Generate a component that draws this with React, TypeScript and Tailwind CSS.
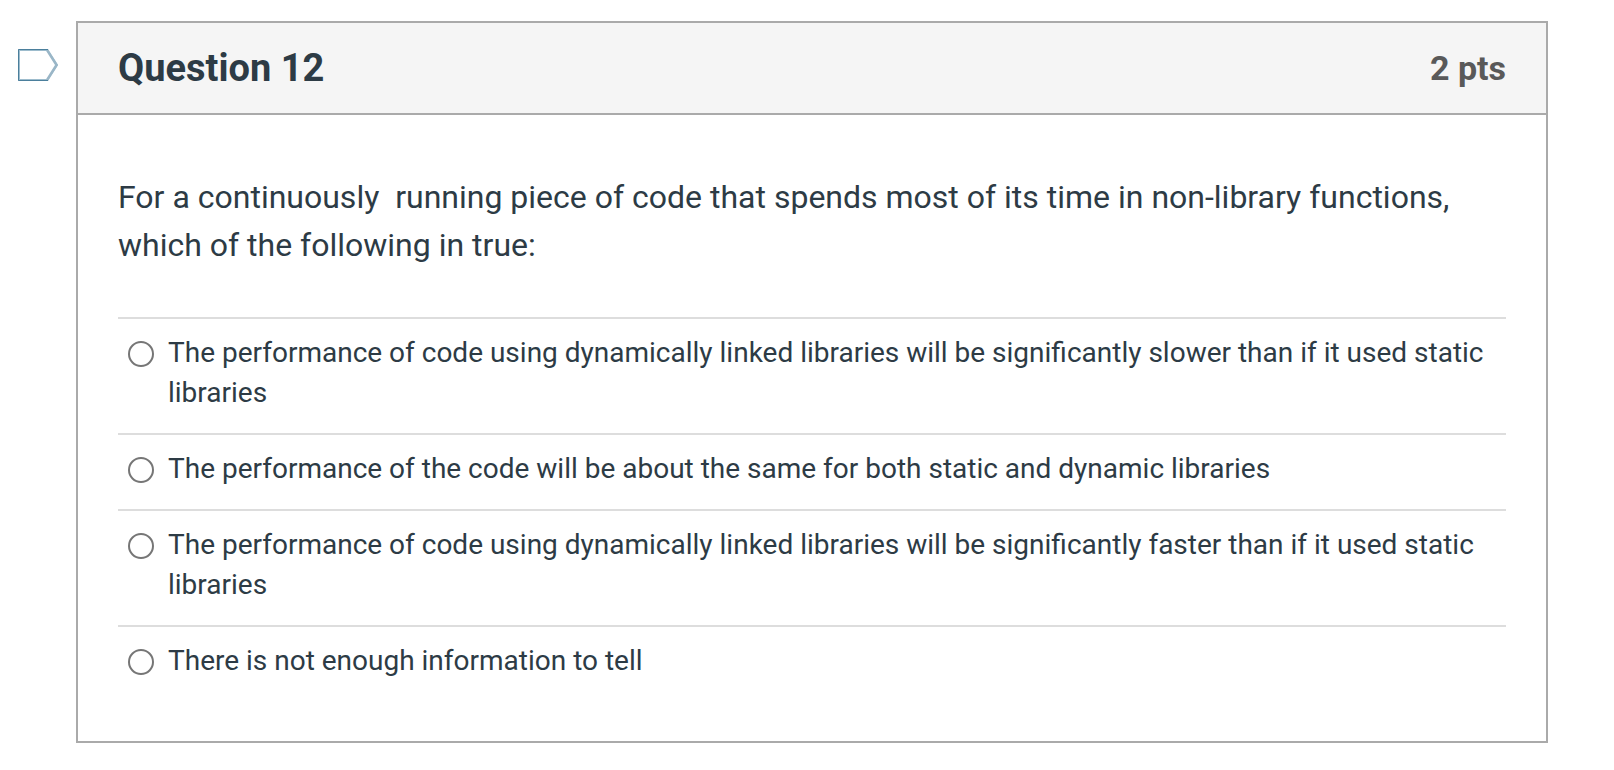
const answers = [
  "The performance of code using dynamically linked libraries will be significantly slower than if it used static libraries",
  "The performance of the code will be about the same for both static and dynamic libraries",
  "The performance of code using dynamically linked libraries will be significantly faster than if it used static libraries",
  "There is not enough information to tell",
];

export default function App() {
  return (
    <main className="flex items-start bg-white pt-[21px] pr-[66px] pb-7 pl-[18px] font-[Roboto,sans-serif] text-[#2d3b45]">
      <button type="button" aria-label="Flag question" className="mt-7 mr-[18px] shrink-0">
        <svg width="40" height="32" viewBox="0 0 40 32" fill="none" className="block">
          <path d="M29.5 1H1v30h28.5L39 16z" stroke="#9dbccd" strokeWidth="2" />
          <path d="M29 1.2L38.5 16 29 30.8" stroke="#9ab6c7" strokeWidth="2.4" />
          <path d="M30 .5H.5v31H30" stroke="#4b7f9c" />
        </svg>
      </button>

      <section className="min-w-0 grow border-2 border-[#aaaaaa] pb-10">
        <header className="flex items-center justify-between border-b-2 border-[#aaaaaa] bg-[#f5f5f5] px-10 py-[18px] leading-[54px] font-bold">
          <h2 className="text-[38px]">Question 12</h2>
          <span className="text-[34px] text-[#595959]">2 pts</span>
        </header>

        <div className="px-10 pt-[58px]">
          <p id="question" className="text-[32px] leading-[48px] whitespace-pre-wrap">
            {"For a continuously  running piece of code that spends most of its time in non-library functions, which of the following in true:"}
          </p>

          <div role="radiogroup" aria-labelledby="question" className="mt-12">
            {answers.map((answer) => (
              <label
                key={answer}
                className="flex items-start border-t-2 border-[#dddddd] pt-[14px] pr-5 pb-5 pl-[10px] text-[28px] leading-[40px]"
              >
                <input
                  type="radio"
                  name="answer"
                  className="mt-2 mr-[14px] size-[26px] shrink-0 appearance-none rounded-full border-2 border-[#767676] bg-white checked:border-8"
                />
                <span>{answer}</span>
              </label>
            ))}
          </div>
        </div>
      </section>
    </main>
  );
}
